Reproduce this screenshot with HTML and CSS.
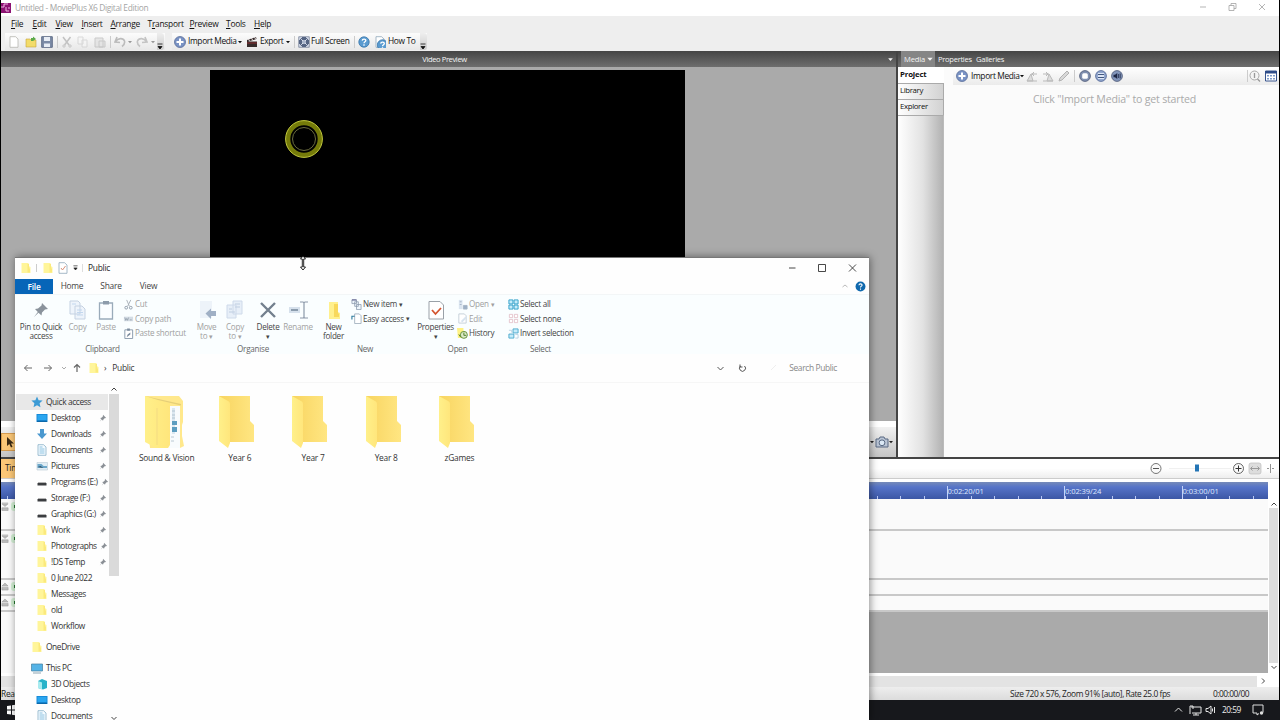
FILE: index.html
```
<!DOCTYPE html>
<html lang="en">
<head>
  <meta charset="UTF-8">
  <title>Untitled - MoviePlus X6 Digital Edition</title>
  <link rel="stylesheet" href="styles.css">
</head>
<body>
  <!-- shared icons -->
  <svg class="defs">
    <defs>
      <linearGradient id="fold" x1="0" x2="1"><stop offset="0" stop-color="#fff08a"/><stop offset="1" stop-color="#ffe67c"/></linearGradient>
      <linearGradient id="foldback" x1="0" x2="1"><stop offset="0" stop-color="#f8d460"/><stop offset="1" stop-color="#ffe682"/></linearGradient>
    </defs>
    <symbol id="folder" viewBox="0 0 12 12"><path d="M1.500 1h7v3l2 1v6h-9z" fill="#fff59a"/><path d="M7.500 2h1.500v4l1 1v3.500h-2.500z" fill="#fbe97c"/></symbol>
    <symbol id="bigfolder" viewBox="0 0 40 56"><path d="M2 2h31v25l4 4v17H12z" fill="url(#foldback)"/><path d="M2 2l9 5c2 1 2 2 2 4v38l-2 5-9-7z" fill="url(#fold)"/></symbol>
    <symbol id="pin" viewBox="0 0 10 10"><path d="M5 1l4 4-2 .3L5.500 7 5 8.500 3.400 7 1 9.300 2.900 6.500 1.500 5l1.600-.4L4.800 3z" fill="#8b9096"/></symbol>
    <symbol id="plus" viewBox="0 0 12 12"><circle cx="6" cy="6" r="5.500" fill="#7992c4" stroke="#5a6e9a" stroke-width=".8"/><path d="M6 2.500v7M2.500 6h7" stroke="#fff" stroke-width="2"/></symbol>
    <symbol id="help" viewBox="0 0 12 12"><circle cx="6" cy="6" r="5.200" fill="#5a9bd0" stroke="#3775aa" stroke-width=".8"/><path d="M4.200 4.600C4.300 2.500 8 2.600 7.800 4.600 7.700 5.800 6 5.800 6 7.300M6 8.300v1.400" fill="none" stroke="#fff" stroke-width="1.300"/></symbol>
    <symbol id="drop" viewBox="0 0 6 6"><path d="M1 2h4L3 4.300z" fill="currentColor"/></symbol>
    <symbol id="over" viewBox="0 0 6 8"><path d="M.5 2h5M1 4.500h4L3 7z" fill="currentColor" stroke="currentColor" stroke-width=".8"/></symbol>
    <symbol id="doc" viewBox="0 0 12 12"><path d="M2 .7h5.500L10 3v8.300H2z" fill="#fff" stroke="#8fa7ba" stroke-width=".8"/></symbol>
    <symbol id="textdoc" viewBox="0 0 12 12"><path d="M2 .7h5.500L10 3v8.300H2z" fill="#f4fbff" stroke="#78a6c0" stroke-width=".7"/><path d="M3.500 3h3M3.500 5h5M3.500 7h5M3.500 9h5" stroke="#75b5d8" stroke-width=".8"/></symbol>
    <symbol id="disk" viewBox="0 0 12 12"><path d="M2 6h8v1.500H2z" fill="#b5b5b5"/><path d="M1.500 7h9v2.500h-9z" fill="#3b3d40"/></symbol>
    <symbol id="screen" viewBox="0 0 12 12"><path d="M.5 2h11v8H.5z" fill="#188bd8"/><path d="M1.500 3h9v5h-9z" fill="#2aa6f0"/><path d="M1 9.300h10" stroke="#0a5f9e"/></symbol>
    <symbol id="bin" viewBox="0 0 9 10"><path d="M1 1h7M1 2h7L4.500 5zM1 6.500h7v3H1z" fill="#bbb" stroke="#999" stroke-width=".6"/></symbol>
    <symbol id="eject" viewBox="0 0 9 10"><path d="M1 4.500L4.500 1 8 4.500zM1 6h7v3H1z" fill="#bbb" stroke="#999" stroke-width=".6"/></symbol>
  </svg>

  <div class="app">
    <div class="titlebar">
      <svg class="logo" viewBox="0 0 10 10"><path d="M0 0h10v10H0z" fill="#8c1272"/><path d="M0 4h3V1h4M5 4v4h3M7 5h2" fill="none" stroke="#f0b6e4"/></svg>
      <span class="title">Untitled - MoviePlus X6 Digital Edition</span>
      <svg class="winctl" viewBox="0 0 76 12"><path d="M7 6h6M36 4.500h5v5h-5zM38 4.500v-2h5v5h-2M66 3l6 6M72 3l-6 6" fill="none" stroke="#a2a2a2" stroke-width=".8"/></svg>
    </div>
    <div class="menubar">
      <span><u>F</u>ile</span><span><u>E</u>dit</span><span><u>V</u>iew</span><span><u>I</u>nsert</span><span><u>A</u>rrange</span><span>T<u>r</u>ansport</span><span><u>P</u>review</span><span><u>T</u>ools</span><span><u>H</u>elp</span>
    </div>
    <div class="toolbars">
      <div class="tools file-tools">
        <svg viewBox="0 0 12 12"><path d="M2 .7h5.500L10 3v8.300H2z" fill="#fff" stroke="#b5b5b0" stroke-width=".8"/></svg>
        <svg viewBox="0 0 12 12"><path d="M1 3h4l1 1h5v7H1z" fill="#f3dc6a" stroke="#c6a63c" stroke-width=".6"/><path d="M6 5V2h2V.5L11 3 8 5z" fill="#5cab4a"/></svg>
        <svg viewBox="0 0 12 12"><path d="M.7.700h10.600v10.600H.7z" fill="#7c8ba6" stroke="#63708a"/><path d="M3 1h6v4H3zM3 7.500h6V11H3z" fill="#e8edf5"/></svg>
        <i class="sep"></i>
        <svg viewBox="0 0 12 12"><path d="M2 1l6 8M9.500 1l-6 8" stroke="#c2c2c2" stroke-width="1.500"/><path d="M2 9h2v2H2zM8 9h2v2H8z" fill="none" stroke="#c8c8c8"/></svg>
        <svg class="faded" viewBox="0 0 12 12"><path d="M1 1h5v7H1zM5 4h5v7H5z" fill="#f6f6f6" stroke="#c8c8c8"/></svg>
        <svg class="faded" viewBox="0 0 12 12"><path d="M1 2h8v9H1zM5 5h6v6H5z" fill="#ddd" stroke="#b0b0b0"/></svg>
        <i class="sep"></i>
        <svg viewBox="0 0 12 12"><path d="M3 1L1 6l5 .5M1.500 5.500C4 2 9 1.500 10.500 5c.5 2-.5 4-2.500 5.500" fill="none" stroke="#bcbcbc" stroke-width="1.600"/></svg>
        <svg class="dd" viewBox="0 0 6 6"><use href="#drop"/></svg>
        <svg viewBox="0 0 12 12"><path d="M9 1l2 5-5 .5M10.500 5.500C8 2 3 1.500 1.500 5c-.5 2 .5 4 2.500 5.500" fill="none" stroke="#c4c4c4" stroke-width="1.600"/></svg>
        <svg class="dd" viewBox="0 0 6 6"><use href="#drop"/></svg>
        <div class="overflow"><svg viewBox="0 0 6 8"><use href="#over"/></svg></div>
      </div>
      <div class="tools main-tools">
        <svg viewBox="0 0 12 12"><use href="#plus"/></svg><span>Import Media</span><svg class="dd" viewBox="0 0 6 6"><use href="#drop"/></svg>
        <svg viewBox="0 0 12 12"><path d="M1 4l9-3 .5 2L2 5.500h9V11H1z" fill="#352b2b"/><path d="M2 3.500l2 1M5 2.500l2 1M8 1.500l2 1" stroke="#e7dede"/><path d="M1 7h10" stroke="#8b2d30"/></svg><span>Export</span><svg class="dd" viewBox="0 0 6 6"><use href="#drop"/></svg>
        <i class="sep"></i>
        <svg viewBox="0 0 12 12"><path d="M.5.500h11v11H.5z" fill="#566583"/><path d="M4 4h4v4H4z" fill="#aeb9ce"/><path d="M1.500 4V1.500H4M8 1.500h2.500V4M10.500 8v2.500H8M4 10.500H1.500V8M2 2l3 3M10 2L7 5M2 10l3-3M10 10L7 7" stroke="#e3e9f3" fill="none" stroke-width=".8"/></svg><span>Full Screen</span>
        <i class="sep"></i>
        <svg viewBox="0 0 12 12"><use href="#help"/></svg>
        <svg viewBox="0 0 12 12"><use href="#doc"/><svg x="2.500" y="3" width="8" height="8" viewBox="0 0 12 12"><use href="#help"/></svg></svg><span>How To</span>
        <div class="overflow"><svg viewBox="0 0 6 8"><use href="#over"/></svg></div>
      </div>
    </div>

    <div class="workspace">
      <div class="preview">
        <div class="dockhead preview-head"><span>Video Preview</span><svg viewBox="0 0 6 6"><use href="#drop"/></svg></div>
        <div class="stage">
          <div class="video">
            <svg class="ring" viewBox="0 0 40 40"><circle cx="20" cy="20" r="16" fill="none" stroke="#757b0a" stroke-width="4.600"/><circle cx="20" cy="20" r="18.400" fill="none" stroke="#c3ca3e"/><circle cx="20" cy="20" r="11.500" fill="none" stroke="#85874d" stroke-width=".8"/></svg>
          </div>
        </div>
        <div class="preview-bar">
          <div class="arrow-tool"><svg viewBox="0 0 10 12"><path d="M2 1v9l2.300-2L6 11.500l1.500-.8L6 7.500h3z" fill="#3b2a14"/></svg></div>
          <div class="snap">
            <svg class="dd" viewBox="0 0 6 6"><use href="#drop"/></svg>
            <svg class="cam" viewBox="0 0 14 12"><path d="M1 3h3l1-2h4l1 2h3v8H1z" fill="#b9c4d4" stroke="#596982"/><circle cx="7" cy="6.800" r="2.900" fill="#dce9f5" stroke="#596982"/></svg>
            <svg class="dd" viewBox="0 0 6 6"><use href="#drop"/></svg>
          </div>
        </div>
      </div>
      <div class="media">
        <div class="dockhead media-head">
          <span class="tab active">Media <svg viewBox="0 0 6 6"><use href="#drop"/></svg></span>
          <span class="tab props">Properties</span>
          <span class="tab">Galleries</span>
        </div>
        <div class="media-body">
          <div class="sidetabs"><b>Project</b><span>Library</span><span>Explorer</span><div class="rest"></div></div>
          <div class="media-main">
            <div class="media-tools">
              <svg viewBox="0 0 12 12"><use href="#plus"/></svg><span>Import Media</span><svg class="dd" viewBox="0 0 6 6"><use href="#drop"/></svg>
              <svg viewBox="0 0 12 12"><path d="M1 11l4-7 2 7zM5 4h6M11 11H1M8 2L6 4l2 2" fill="#ddd" stroke="#bbb"/></svg>
              <svg viewBox="0 0 12 12"><path d="M11 11L7 4l-2 7zM1 4h6M1 11h10M4 2l2 2-2 2" fill="#ddd" stroke="#bbb"/></svg>
              <svg viewBox="0 0 12 12"><path d="M1 11l1-3 7-7 2 2-7 7z" fill="#d8d8d8" stroke="#b2b2b2"/></svg>
              <i class="sep"></i>
              <svg viewBox="0 0 12 12"><circle cx="6" cy="6" r="5.400" fill="#8090b0" stroke="#4a5673" stroke-width=".8"/><rect x="3.200" y="3.200" width="5.600" height="5.600" rx="1.500" fill="#fff"/></svg>
              <svg viewBox="0 0 12 12"><circle cx="6" cy="6" r="5.400" fill="#93a8cf" stroke="#4a5f90" stroke-width=".8"/><path d="M3 3h6v6H3z" fill="#dce5f5"/><path d="M3 4.500h6M3 7.500h6" stroke="#42577f"/></svg>
              <svg viewBox="0 0 12 12"><circle cx="6" cy="6" r="5.400" fill="#8295ba" stroke="#4a5673" stroke-width=".8"/><path d="M2.500 4.700h1.500L6.300 3v6L4 7.300H2.500z" fill="#1d2745"/><path d="M7.600 4v4M9.200 3.500v5" stroke="#1d2745" stroke-width=".8"/></svg>
              <i class="sep last"></i>
              <svg viewBox="0 0 12 12"><circle cx="5.500" cy="5.500" r="4.500" fill="#f4f4f4" stroke="#aaa"/><path d="M5.500 3v5M8.500 9l2.500 2.500" stroke="#999" stroke-width="1.300"/></svg>
              <svg viewBox="0 0 12 12"><path d="M.5 1h11v10H.5z" fill="#fff" stroke="#38548d"/><path d="M0 1h12v2.500H0z" fill="#2e4c89"/><path d="M2 5h2v1.500H2zM5 5h2v1.500H5zM8 5h2v1.500H8zM2 8h2v1.500H2zM5 8h2v1.500H5zM8 8h2v1.500H8z" fill="#7e9bcc"/></svg>
            </div>
            <p class="hint">Click "Import Media" to get started</p>
          </div>
        </div>
      </div>
    </div>

    <div class="timeline">
      <div class="tl-head">
        <span class="tl-tab">Timeline</span>
        <svg class="zoomer" viewBox="0 0 132 20"><circle cx="13" cy="9.500" r="5" fill="#fafafa" stroke="#666" stroke-width=".9"/><path d="M10 9.500h6" stroke="#555"/><path d="M26 9.500h62" stroke="#f0f0f0"/><path d="M52 5.500h4v7h-4z" fill="#2475b5"/><circle cx="95.500" cy="9.500" r="5" fill="#fafafa" stroke="#555" stroke-width=".9"/><path d="M92.500 9.500h6M95.500 6.500v6" stroke="#333"/><rect x="106" y="4" width="12" height="11" rx="2" fill="#ddd" stroke="#bbb" stroke-width=".7"/><path d="M108 9.500h8M109.500 7.500l-2 2 2 2M114.500 7.500l2 2-2 2" fill="none" stroke="#888" stroke-width=".8"/><path d="M127.500 5v9M124 9.500h2M129 9.500h2" stroke="#888" stroke-width=".9"/></svg>
      </div>
      <div class="tl-body">
        <div class="tl-main">
          <div class="ruler"><span>0:02:20/01</span><span>0:02:39/24</span><span>0:03:00/01</span></div>
          <div class="track t1"><svg viewBox="0 0 9 10"><use href="#bin"/></svg><i class="dot"></i></div>
          <div class="track t2"><svg viewBox="0 0 9 10"><use href="#bin"/></svg><i class="dot"></i></div>
          <div class="track t3"><svg viewBox="0 0 9 10"><use href="#eject"/></svg><i class="dot"></i></div>
          <div class="track t4"><svg viewBox="0 0 9 10"><use href="#eject"/></svg><i class="dot"></i></div>
          <div class="empty"></div>
        </div>
        <div class="vscroll"><svg viewBox="0 0 8 8"><path d="M1.500 5.500L4 3l2.500 2.500" /></svg><div class="thumb"></div><svg viewBox="0 0 8 8"><path d="M1.500 3L4 5.500 6.500 3" /></svg></div>
      </div>
      <div class="hscroll"><svg viewBox="0 0 8 8"><path d="M3 1.500L5.500 4 3 6.500"/></svg></div>
    </div>
    <div class="status"><span class="ready">Ready</span><span class="size">Size 720 x 576, Zoom 91% [auto], Rate 25.0 fps</span><span class="time">0:00:00/00</span></div>
  </div>

  <div class="taskbar">
    <svg class="start" viewBox="0 0 12 12"><path d="M1 2l4-.6v4.200H1zM6 1.200L11 .5v5.100H6zM1 6.400h4v4.200L1 10zM6 6.400h5v5.100l-5-.7z" fill="#fff"/></svg>
    <svg class="tray" viewBox="0 0 46 14"><path d="M4 8.500L7.500 5 11 8.500M20 4h10v6H21M25 10v2M22 12h6M19 3h3v3M19 3v8M35 5.500h2L40 3v8l-3-2.500h-2zM41.500 5.500v3M43.500 4v6" fill="none" stroke="#e5e5e5"/></svg>
    <span>20:59</span>
    <svg class="note" viewBox="0 0 12 12"><path d="M1 1h10v7.500M7 9.500L5 11V9H1V1" fill="none" stroke="#ddd"/><circle cx="9.500" cy="9" r="1.700" fill="#ddd"/></svg>
  </div>

  <!-- explorer window -->
  <div class="explorer">
    <div class="ex-title">
      <svg viewBox="0 0 12 12"><use href="#folder"/></svg><i class="sep"></i>
      <svg viewBox="0 0 12 12"><use href="#folder"/></svg>
      <svg viewBox="0 0 12 12"><use href="#doc"/><path d="M4 6l1.500 2L8.500 4" fill="none" stroke="#d8917a"/></svg>
      <svg class="qd" viewBox="0 0 6 8"><use href="#over"/></svg><i class="sep"></i>
      <span>Public</span>
      <svg class="exctl" viewBox="0 0 76 12"><path d="M5 6h6.500M34.500 2.500h7v7h-7zM65 2.500l7 7M72 2.500l-7 7" fill="none" stroke="#333" stroke-width=".9"/></svg>
    </div>
    <div class="ex-tabs">
      <span class="file">File</span><span>Home</span><span>Share</span><span>View</span>
      <svg class="chev" viewBox="0 0 8 8"><path d="M1.500 5L4 3l2.500 2" fill="none" stroke="#bbb"/></svg>
      <svg class="exhelp" viewBox="0 0 12 12"><circle cx="6" cy="6" r="5.400" fill="#1069ae"/><path d="M4.300 4.600C4.400 2.600 7.900 2.700 7.700 4.600 7.600 5.700 6 5.700 6 7.200M6 8.200v1.300" fill="none" stroke="#fff" stroke-width="1.200"/></svg>
    </div>
    <div class="ribbon">
      <div class="group clipboard">
        <div class="cmds">
          <div class="big on"><svg viewBox="0 0 20 20"><path d="M11 3l6 6-3 .5-3 3-.5 3-3-2.700L3 17l3.800-5L4 9l3-.5 3.500-3z" fill="#8a939c"/></svg><span>Pin to Quick<br>access</span></div>
          <div class="big"><svg viewBox="0 0 20 20"><path d="M2 1h8l2 2v11H2zM7 6h7l3 3v10H7z" fill="#eef4fb" stroke="#c5d2e2"/><path d="M9 10h5M9 12.500h6M9 15h6M4 4h4" stroke="#c2d7ee"/></svg><span>Copy</span></div>
          <div class="big"><svg viewBox="0 0 20 20"><path d="M3.500 3h13v16h-13z" fill="#fbfdff" stroke="#9aabba" stroke-width="1.300"/><path d="M7 1h6v3.500H7z" fill="#8d9baa"/></svg><span>Paste</span></div>
          <div class="list">
            <div><svg viewBox="0 0 12 12"><path d="M4 1l3 7M8.500 1L5 8" stroke="#a7afb7" fill="none"/><circle cx="3.500" cy="9.500" r="1.500" fill="none" stroke="#8d9aa8"/><circle cx="8.500" cy="9.500" r="1.500" fill="none" stroke="#8d9aa8"/></svg>Cut</div>
            <div><svg viewBox="0 0 12 12"><path d="M1 4h10v5H1z" fill="#d4dce4"/><path d="M2 5l1 3 1-2 1 2 1-3M7.500 7.500h2" stroke="#8b98a6" fill="none" stroke-width=".8"/></svg>Copy path</div>
            <div><svg viewBox="0 0 12 12"><path d="M2 2h8.500v9.500H2z" fill="#fff" stroke="#8597a9"/><path d="M4.500.5h3v2.500h-3zM4 10l1-3 3-2v2z" fill="#7b8c9e"/></svg>Paste shortcut</div>
          </div>
        </div>
        <div class="name">Clipboard</div>
      </div>
      <div class="group organise">
        <div class="cmds">
          <div class="big"><svg viewBox="0 0 20 20"><path d="M3 1h12v17H3z" fill="#edf3f9"/><path d="M19 11v5h-5v3L8.500 13.500 14 8.500V11z" fill="#a0b0c5"/></svg><span>Move<br>to <small>▾</small></span></div>
          <div class="big"><svg viewBox="0 0 20 20"><path d="M2 5h9v13H2zM8 1h9v13H8z" fill="#e7eff8" stroke="#cedaea"/><path d="M10 4h5M10 7h5M4 9h3M4 12h6" stroke="#bfcee1"/></svg><span>Copy<br>to <small>▾</small></span></div>
          <div class="big on"><svg viewBox="0 0 20 20"><path d="M3 3l14 14M17 3L3 17" stroke="#73808e" stroke-width="2.400"/></svg><span>Delete<br><small>▾</small></span></div>
          <div class="big"><svg viewBox="0 0 20 20"><path d="M1 7h11v6H1z" fill="#d6e1ec"/><path d="M3 9h7v2H3z" fill="#8b9cad"/><path d="M12 2h3c1 0 1 0 1 1v14c0 1 0 1-1 1h-3M20 2h-3c-1 0-1 0-1 1M20 18h-3c-1 0-1 0-1-1" fill="none" stroke="#8b98a9" stroke-width="1.200"/></svg><span>Rename</span></div>
        </div>
        <div class="name">Organise</div>
      </div>
      <div class="group new">
        <div class="cmds">
          <div class="big on"><svg viewBox="0 0 20 20"><path d="M5 2h9v10l2 1v6H5z" fill="#fff08e"/><path d="M10 4h4v9l1 1v3h-5z" fill="#f8d85c"/></svg><span>New<br>folder</span></div>
          <div class="list on">
            <div><svg viewBox="0 0 12 12"><path d="M1 1h5v4H1zM4 3h4v5H4zM6 6h5v5.500H6z" fill="#eef5fb" stroke="#8796a8" stroke-width=".8"/><path d="M1 1h5" stroke="#558"/></svg>New item <small>▾</small></div>
            <div><svg viewBox="0 0 12 12"><path d="M4 1h5l2 2v8.500H4z" fill="#fff" stroke="#8fa0b1" stroke-width=".8"/><path d="M1 7V3.500h3" fill="none" stroke="#2c7a9c" stroke-width="1.200"/></svg>Easy access <small>▾</small></div>
          </div>
        </div>
        <div class="name">New</div>
      </div>
      <div class="group open">
        <div class="cmds">
          <div class="big on"><svg viewBox="0 0 20 20"><path d="M3 1.500h11L17.500 5v14H3z" fill="#fff" stroke="#9aa1a8"/><path d="M6 10l3.500 4L15 8" fill="none" stroke="#d4552f" stroke-width="1.800"/></svg><span>Properties<br><small>▾</small></span></div>
          <div class="list">
            <div><svg viewBox="0 0 12 12"><path d="M2 1h4v10H2z" fill="#dbe5f0"/><path d="M7 7h4v4H7zM3 3h2M3 6h2" fill="#9db0c6" stroke="#a5b5c5"/></svg>Open <small>▾</small></div>
            <div><svg viewBox="0 0 12 12"><path d="M2 1h6l2 2v8H2z" fill="#fff" stroke="#c3ced8"/><path d="M4 9l5-5 2 1-5 5z" fill="#d7e3ef"/></svg>Edit</div>
            <div class="dark"><svg viewBox="0 0 12 12"><path d="M0 0h7v3l3 1v7H1z" fill="#fff283"/><circle cx="7.500" cy="7.500" r="3.800" fill="#dce9c8" stroke="#5f8d35"/><path d="M7.500 5v3h2.500M2 7l2 3" fill="none" stroke="#467a20"/></svg>History</div>
          </div>
        </div>
        <div class="name">Open</div>
      </div>
      <div class="group select">
        <div class="cmds">
          <div class="list on">
            <div><svg viewBox="0 0 12 12"><path d="M1 1h4.400v4.400H1zM6.600 1H11v4.400H6.600zM1 6.600h4.400V11H1zM6.600 6.600H11V11H6.600z" fill="#c5ebfa" stroke="#2e9fc8" stroke-width="1"/></svg>Select all</div>
            <div><svg viewBox="0 0 12 12"><path d="M1.500 1.500h3.500V5H1.500zM7 1.500h3.500V5H7zM1.500 7h3.500v3.500H1.500zM7 7h3.500v3.500H7z" fill="#fff" stroke="#dfb6c0" stroke-width=".8"/></svg>Select none</div>
            <div><svg viewBox="0 0 12 12"><path d="M5.500 1H11v4.400H5.500zM1 6.600h5.400V11H1z" fill="#c5ebfa" stroke="#4aa8cc"/><path d="M1 2.500h3V5M8 7h3v4H8" fill="none" stroke="#a9c6dc" stroke-width=".8"/></svg>Invert selection</div>
          </div>
        </div>
        <div class="name">Select</div>
      </div>
    </div>
    <div class="address">
      <svg class="nav" viewBox="0 0 70 12"><path d="M17 6H9.500M12.500 3l-3 3 3 3M29 6h7.500M33.500 3l3 3-3 3" fill="none" stroke="#666"/><path d="M47 5l2 2 2-2" fill="none" stroke="#aaa"/><path d="M62 10V2.500M59 5.500l3-3 3 3" fill="none" stroke="#666" stroke-width="1.200"/></svg>
      <svg class="af" viewBox="0 0 12 12"><use href="#folder"/></svg>
      <span class="crumb">›</span><span class="path">Public</span>
      <svg class="refresh" viewBox="0 0 40 12"><path d="M6.500 5l3 3 3-3" fill="none" stroke="#555"/><path d="M29.500 4a3 3 0 1 0 4 0M29 2.500v2.500h2.500" fill="none" stroke="#555"/></svg>
      <div class="search"><svg viewBox="0 0 8 8"><path d="M1 7l5-5" stroke="#eee"/></svg>Search Public</div>
    </div>
    <div class="ex-body">
      <div class="tree">
        <div class="root quick"><svg viewBox="0 0 12 12"><path d="M6 .5l1.600 3.700 4 .4-3 2.700.9 4L6 9.200l-3.500 2.100.9-4-3-2.700 4-.4z" fill="#3d9bd5"/></svg>Quick access</div>
        <div class="item"><svg viewBox="0 0 12 12"><use href="#screen"/></svg>Desktop<svg class="pin" viewBox="0 0 10 10"><use href="#pin"/></svg></div>
        <div class="item"><svg viewBox="0 0 12 12"><path d="M4 1h4v4.500h3L6 11 1 5.500h3z" fill="#4a98cf"/></svg>Downloads<svg class="pin" viewBox="0 0 10 10"><use href="#pin"/></svg></div>
        <div class="item"><svg viewBox="0 0 12 12"><use href="#textdoc"/></svg>Documents<svg class="pin" viewBox="0 0 10 10"><use href="#pin"/></svg></div>
        <div class="item"><svg viewBox="0 0 12 12"><path d="M1 2.500h10.500v7.500H1z" fill="#e1edf4" stroke="#b8c9d3" stroke-width=".6"/><path d="M1.500 4h4l2 2h3.500v2H1.500z" fill="#6da8ca"/><path d="M1.500 7l3-1 3 2z" fill="#34536a"/></svg>Pictures<svg class="pin" viewBox="0 0 10 10"><use href="#pin"/></svg></div>
        <div class="item"><svg viewBox="0 0 12 12"><use href="#disk"/></svg>Programs (E:)<svg class="pin" viewBox="0 0 10 10"><use href="#pin"/></svg></div>
        <div class="item"><svg viewBox="0 0 12 12"><use href="#disk"/></svg>Storage (F:)<svg class="pin" viewBox="0 0 10 10"><use href="#pin"/></svg></div>
        <div class="item"><svg viewBox="0 0 12 12"><use href="#disk"/></svg>Graphics (G:)<svg class="pin" viewBox="0 0 10 10"><use href="#pin"/></svg></div>
        <div class="item"><svg viewBox="0 0 12 12"><use href="#folder"/></svg>Work<svg class="pin" viewBox="0 0 10 10"><use href="#pin"/></svg></div>
        <div class="item"><svg viewBox="0 0 12 12"><use href="#folder"/></svg>Photographs<svg class="pin" viewBox="0 0 10 10"><use href="#pin"/></svg></div>
        <div class="item"><svg viewBox="0 0 12 12"><use href="#folder"/></svg>!DS Temp<svg class="pin" viewBox="0 0 10 10"><use href="#pin"/></svg></div>
        <div class="item"><svg viewBox="0 0 12 12"><use href="#folder"/></svg>0 June 2022</div>
        <div class="item"><svg viewBox="0 0 12 12"><use href="#folder"/></svg>Messages</div>
        <div class="item"><svg viewBox="0 0 12 12"><use href="#folder"/></svg>old</div>
        <div class="item"><svg viewBox="0 0 12 12"><use href="#folder"/></svg>Workflow</div>
        <div class="root gap"><svg viewBox="0 0 12 12"><use href="#folder"/></svg>OneDrive</div>
        <div class="root gap"><svg viewBox="0 0 12 12"><path d="M.5 2h11v7H.5z" fill="#55b3e6" stroke="#44809f" stroke-width=".7"/><path d="M2 11h8" stroke="#8da5b3"/></svg>This PC</div>
        <div class="item"><svg viewBox="0 0 12 12"><path d="M2 3l4-2 5 2v7l-4 1.500L2 10z" fill="#29b3c9"/><path d="M2 3l4 1.500v7L2 10z" fill="#a8ebef"/></svg>3D Objects</div>
        <div class="item"><svg viewBox="0 0 12 12"><use href="#screen"/></svg>Desktop</div>
        <div class="item"><svg viewBox="0 0 12 12"><use href="#textdoc"/></svg>Documents</div>
      </div>
      <div class="tree-scroll"><svg viewBox="0 0 8 8"><path d="M1.500 5.500L4 3l2.500 2.500"/></svg><div class="thumb"></div><svg viewBox="0 0 8 8"><path d="M1.500 3L4 5.500 6.500 3"/></svg></div>
      <div class="files">
        <div class="tile"><svg viewBox="0 0 40 56"><path d="M1 2h34l4 5v21l-1 3v11l2 10-4 2H6z" fill="#ffe88c"/><path d="M24 12h12v42H24z" fill="#f8fbfd"/><path d="M28 14h3v26h-3z" fill="#dbe7f0"/><path d="M28 27h5v4h-5zM28 33h5v5h-5z" fill="#5c9dc0"/><path d="M28 17h3M28 21h3M28 24h3M27 43h3M27 47h3" stroke="#a9bcc8" stroke-width=".8"/><path d="M1 2l25 7v42l-2 3H12L1 48z" fill="url(#fold)"/><path d="M1 2l36 8v1.500L14 6z" fill="#e6cf78"/><path d="M13 14v37" stroke="#f9e383" stroke-width="2"/></svg>Sound &amp; Vision</div>
        <div class="tile"><svg viewBox="0 0 40 56"><use href="#bigfolder"/></svg>Year 6</div>
        <div class="tile"><svg viewBox="0 0 40 56"><use href="#bigfolder"/></svg>Year 7</div>
        <div class="tile"><svg viewBox="0 0 40 56"><use href="#bigfolder"/></svg>Year 8</div>
        <div class="tile"><svg viewBox="0 0 40 56"><use href="#bigfolder"/></svg>zGames</div>
      </div>
    </div>
  </div>
  <svg class="cursor" viewBox="0 0 8 16"><path d="M4 1L1.500 4h1.800v8H1.500L4 15l2.500-3H4.700V4h1.800z" fill="#fff" stroke="#111" stroke-width=".9"/></svg>
</body>
</html>
```
FILE: styles.css
```
* { box-sizing: border-box; }
body {
  margin: 0;
  width: 1280px;
  height: 720px;
  overflow: hidden;
  position: relative;
  background: #000;
  font: 8.400px/10px "Open Sans", "Noto Sans", sans-serif;
  letter-spacing: -.25px;
  color: #222;
  white-space: nowrap;
}
svg { display: block; flex: none; }
.defs { position: absolute; width: 0; height: 0; }
.sep { width: 1px; height: 12px; background: #ccc; flex: none; }

/* main application */
.app { height: 700px; margin: 0 1px; background: #eee; display: flex; flex-direction: column; }
.titlebar { height: 16px; background: #fff; display: flex; align-items: center; }
.logo { width: 10px; height: 10px; }
.title { margin-left: 4px; color: #a5a5a5; letter-spacing: -.33px; }
.winctl { width: 76px; height: 12px; margin-left: auto; margin-right: 10px; margin-bottom: 2px; }
.menubar {
  height: 17px;
  padding: 0 0 2px 10px;
  display: grid;
  grid-template-columns: 21.500px 23px 26px 29px 37px 42px 36.500px 28px 30px;
  align-items: center;
  color: #111;
}
.menubar u { text-underline-offset: 1px; text-decoration-thickness: 1px; }
.toolbars { height: 18px; display: flex; padding-left: 4px; }
.tools {
  display: grid;
  align-items: center;
  justify-items: center;
  height: 17px;
  background: linear-gradient(#fcfcfc, #e8e8e8);
  color: #111;
}
.tools svg { width: 12px; height: 12px; }
.tools > .dd, .media-tools > .dd, .snap .dd { width: 6px; height: 6px; }
.tools > span { justify-self: start; padding-bottom: 1px; letter-spacing: -.36px; }
.file-tools { grid-template-columns: 18px 16px 16px 4px 15px 18px 15px 6px 13px 8px 15px 7px 9px; color: #999; }
.faded { opacity: .6; }
.main-tools { margin-left: 7px; grid-template-columns: 16px 49px 6px 17px 25px 6px 6px 14px 41px 5px 14px 17px 31px 8px; color: #111; }
.overflow { width: 7px; height: 17px; background: linear-gradient(#eee, #ccc); display: flex; align-items: flex-end; color: #111; border-radius: 0 3px 3px 0; }
.overflow svg { width: 6px; height: 8px; }

.workspace { height: 406px; display: flex; }
.preview { width: 895px; display: flex; flex-direction: column; }
.dockhead { height: 16px; background: linear-gradient(#454545, #6e6e6e); color: #f4f4f4; display: flex; align-items: center; flex: none; font-size: 7.600px; letter-spacing: -.15px; }
.preview-head { justify-content: center; position: relative; letter-spacing: -.4px; padding-right: 8px; }
.preview-head svg { position: absolute; right: 2px; width: 7px; height: 7px; }
.stage { height: 354px; background: #aaa; padding: 3px 0 0 209px; }
.video { width: 475px; height: 270px; background: #000; position: relative; }
.ring { position: absolute; left: 74px; top: 49px; width: 40px; height: 40px; }
.preview-bar { height: 36px; border-top: 6px solid #fff; background: linear-gradient(#f2f2f2, #c5c5c5); display: flex; align-items: center; justify-content: space-between; }
.arrow-tool { width: 16px; height: 18px; background: #fbc777; border: 1px solid #d59c50; display: flex; align-items: center; padding-left: 3px; }
.arrow-tool svg { width: 10px; height: 12px; }
.snap { display: flex; align-items: center; padding-right: 2px; color: #222; }
.snap .dd:last-child { margin-left: -1px; }
.cam { width: 14px; height: 12px; }
.media { flex: 1; border-left: 2px solid #444; display: flex; flex-direction: column; }
.media-head { padding-left: 3px; }
.media-head .active { background: #858585; height: 16px; width: 34px; padding-left: 3px; display: flex; align-items: center; justify-content: space-between; }
.active svg { width: 8px; height: 8px; margin-right: 1px; }
.media-head .props { margin-left: 3px; width: 38px; letter-spacing: -.3px; }
.media-head .tab:last-child { letter-spacing: -.3px; }
.media-body { flex: 1; display: flex; }
.sidetabs { width: 46px; display: flex; flex-direction: column; color: #111; }
.sidetabs > b, .sidetabs > span { height: 16px; padding: 2px 0 0 2px; font-size: 7.800px; letter-spacing: -.15px; }
.sidetabs > span { padding: 1px 0 0 2px; letter-spacing: -.35px; }
.sidetabs b { background: #fff; }
.sidetabs span { background: linear-gradient(90deg, #fff, #d2d2d2); border-top: 1px solid #aaa; border-right: 1px solid #aaa; }
.sidetabs .rest { flex: 1; background: linear-gradient(90deg, #fff, #e2e2e2 55%, #b2b2b2); border-top: 1px solid #aaa; border-right: 1px solid #bbb; }
.media-main { flex: 1; background: #fbfbfb; }
.media-tools {
  height: 18px;
  margin-left: 9px;
  display: grid;
  grid-template-columns: 18px 48px 5px 16px 16px 16px 5px 16px 16px 16px 1fr 14px 17px;
  align-items: center;
  justify-items: center;
  background: linear-gradient(#fff, #ebebeb);
  color: #111;
}
.media-tools span { letter-spacing: -.36px; justify-self: start; }
.media-tools svg { width: 12px; height: 12px; }
.media-tools .last { justify-self: end; }
.hint { margin: 9px 0 0 6px; text-align: center; color: #aaa; font-size: 10.600px; line-height: 11px; letter-spacing: -.2px; }

.timeline { height: 230px; border-top: 2px solid #444; background: #fff; display: flex; flex-direction: column; }
.tl-head { height: 20px; border-bottom: 1px solid #ccc; background: linear-gradient(#fff 50%, #eee); display: flex; justify-content: space-between; }
.tl-tab { width: 40px; padding: 4px 0 0 4px; background: #fbc777; overflow: hidden; }
.zoomer { width: 132px; height: 20px; margin-right: 4px; }
.tl-body { height: 194px; display: flex; }
.tl-main { width: 1267px; padding-top: 3px; }
.ruler {
  height: 17px;
  padding: 4px 0 0 945.500px;
  display: flex;
  overflow: hidden;
  font-size: 7.600px;
  color: #dfe8ff;
  background:
    repeating-linear-gradient(90deg, #bac9f4 0 1px, transparent 1px 23.500px) 5.500px 100% / 100% 3px no-repeat,
    linear-gradient(#768bb9, #5674c8 30%, #3c57a5);
}
.ruler span { flex: none; width: 117.500px; border-left: 1px solid #c4d2fa; height: 13px; line-height: 10px; letter-spacing: -.1px; }
.track { background: #fafafa; border-bottom: 2px solid #c8c8c8; display: flex; align-items: flex-start; padding: 3px 0 0 0; }
.track svg { width: 8px; height: 9px; }
.dot { width: 9px; height: 9px; border-radius: 3px; background: #267a30; border: 3px solid #d4f0d5; margin-left: 2px; }
.t1 { height: 32px; }
.t2 { height: 49px; }
.t3, .t4 { height: 16px; padding-top: 2px; }
.empty { height: 61px; background: linear-gradient(90deg, #fafafa 20px, #aaa 20px); }
.vscroll { width: 11px; padding: 21px 0 2px; display: flex; flex-direction: column; align-items: center; }
.vscroll svg, .tree-scroll svg, .hscroll svg { width: 8px; height: 8px; fill: none; stroke: #444; stroke-width: 1; }
.vscroll .thumb { flex: 1; width: 9px; background: #ddd; }
.hscroll { height: 14px; border-top: 3px solid #fff; background: #e3e3e3; display: flex; justify-content: flex-end; align-items: center; }
.hscroll svg { width: 22px; height: 11px; padding: 1px 12px 2px 2px; background: #fff; }
.status { height: 13px; background: linear-gradient(#eee, #dcdcdc); display: flex; align-items: center; color: #222; }
.ready { width: 1009px; }
.size { width: 203px; letter-spacing: -.45px; }
.time { letter-spacing: -.5px; }

.taskbar { height: 20px; background: #17181c; color: #eee; display: flex; align-items: center; }
.start { width: 12px; height: 12px; margin-left: 6px; }
.tray { width: 46px; height: 14px; margin-left: 1153px; }
.taskbar span { margin-left: 5px; width: 30px; letter-spacing: -.5px; }
.note { width: 12px; height: 12px; }

/* explorer */
.explorer {
  position: absolute;
  left: 15px;
  top: 257px;
  width: 854px;
  height: 463px;
  background: #fefefe;
  border-top: 1px solid #777;
  box-shadow: 1px 0 8px rgba(0,0,0,.45);
  overflow: hidden;
}
.ex-title { height: 20px; display: flex; align-items: center; padding: 0 0 1px 5px; }
.ex-title svg { width: 12px; height: 12px; }
.ex-title .sep { height: 8px; margin: 0 5px 0 4px; }
.ex-title svg + svg { margin-left: 3px; }
.ex-title .qd { width: 5px; height: 7px; margin-left: 4px !important; }
.ex-title .qd + .sep { background: #ddd; }
.ex-title .exctl { width: 76px; height: 12px; margin-left: auto; margin-right: 9px; }
.ex-tabs { height: 16px; display: grid; grid-template-columns: 38px 38px 40px 35px 1fr 10px 18px; text-align: center; align-items: center; color: #444; }
.ex-tabs .file { background: #0765b8; color: #fff; height: 15px; line-height: 15px; font-weight: 600; }
.chev { width: 8px; height: 8px; grid-column: 6; }
.exhelp { width: 11px; height: 11px; margin-left: 4px; }
.ribbon { height: 60px; background: #fafeff; display: flex; border-top: 1px solid #f3f6f7; font-size: 8.100px; }
.group { display: flex; flex-direction: column; }
.clipboard { width: 175px; }
.organise { width: 126px; }
.new { width: 98px; }
.open { width: 87px; }
.select { width: 79px; }
.cmds { height: 49px; display: flex; }
.clipboard .cmds { padding-left: 1px; }
.select .cmds { padding-left: 7px; }
.name { text-align: center; color: #666; line-height: 10px; }
.big { display: flex; flex-direction: column; align-items: center; text-align: center; line-height: 9px; padding-top: 5px; color: #a2a2a2; width: 24px; }
.big svg { width: 20px; height: 20px; margin-bottom: 2px; }
.big small, .list small { font-size: 7px; line-height: 5px; color: inherit; }
.big.on, .list.on, .list .dark { color: #444; }
.clipboard .big:nth-child(1) { width: 50px; }
.clipboard .big:nth-child(2) { width: 23px; }
.clipboard .big:nth-child(3) { width: 34px; }
.organise .big:nth-child(1) { width: 33px; }
.organise .big:nth-child(3) { width: 42px; }
.organise .big:nth-child(4) { width: 18px; }
.new .big { width: 35px; }
.open .big { width: 43px; }
.list { padding-top: 2px; color: #a0a0a0; }
.list div { height: 14.500px; display: flex; align-items: center; gap: 1px; }
.list svg { width: 11px; height: 11px; }
.list small { margin-left: 1px; }
.address { height: 29px; display: flex; align-items: center; border-bottom: 1px solid #f6f6f6; color: #333; }
.nav { width: 70px; height: 12px; }
.af { width: 12px; height: 12px; margin-left: 3px; }
.crumb { margin: 0 6px 1px 4px; }
.path { width: 599px; }
.refresh { width: 40px; height: 12px; }
.search { margin-left: 19px; display: flex; color: #888; gap: 11px; letter-spacing: -.35px; }
.search svg { width: 8px; height: 8px; }
.ex-body { height: 337px; display: flex; }
.tree { width: 93px; padding-top: 11px; color: #333; letter-spacing: -.4px; }
.tree > div { height: 16px; display: flex; align-items: center; gap: 3px; padding: 0 0 1px 17px; }
.tree > .item { padding-left: 21px; }
.tree svg { width: 12px; height: 12px; }
.tree .pin { margin-left: auto; width: 8px; height: 8px; margin-right: 1px; }
.tree > .quick { background: #e8e8e8; margin-left: 1px; padding-left: 15px; }
.tree > .gap { margin-top: 5px; padding-left: 16px; }
.tree-scroll { width: 12px; padding-top: 2px; display: flex; flex-direction: column; align-items: center; }
.tree-scroll .thumb { flex: none; width: 10px; height: 182px; background: #dadada; margin: 1px 0 138px; }
.files { display: flex; padding: 11px 0 0 10px; }
.tile { width: 73.200px; text-align: center; color: #333; }
.tile svg { width: 40px; height: 56px; margin: 0 0 3px 14px; }
.cursor { position: absolute; left: 299px; top: 255px; width: 8px; height: 16px; }
```
